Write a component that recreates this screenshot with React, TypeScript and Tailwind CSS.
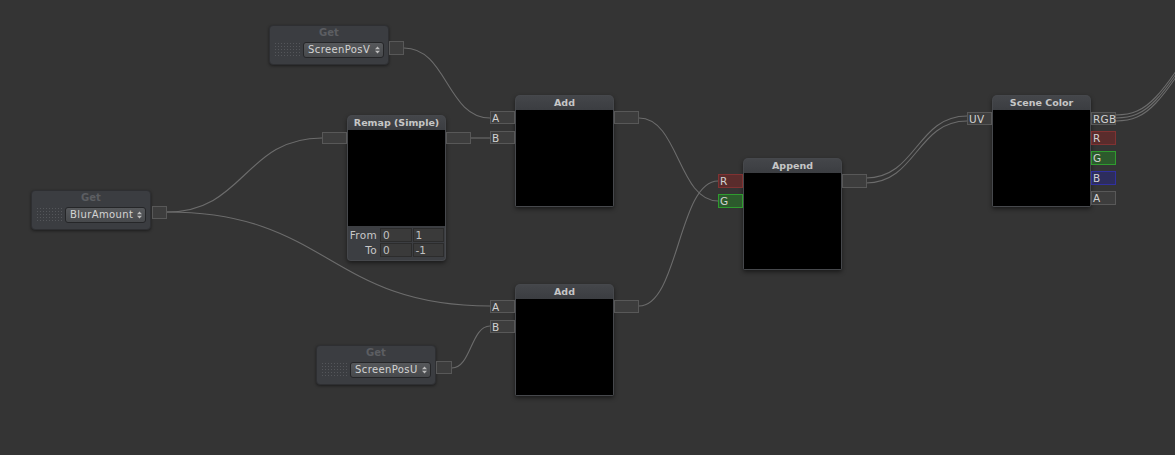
import React from 'react';

type PortKind = 'plain' | 'r' | 'g' | 'b';

interface PortDef {
  x: number;
  y: number;
  w?: number;
  h?: number;
  label?: string;
  kind?: PortKind;
}

interface NodeDef {
  x: number;
  y: number;
  title: string;
}

interface GetDef {
  x: number;
  y: number;
  name: string;
}

const portStyle: Record<PortKind, string> = {
  plain: 'bg-[#3d3d3d] border-[#585858]',
  r: 'bg-[#5a2c2c] border-[#803232]',
  g: 'bg-[#2c5a2c] border-[#2f9b2f]',
  b: 'bg-[#2d2d5d] border-[#30309f]',
};

// bezier with horizontal tangents, like the editor draws its wires
const wire = (x1: number, y1: number, x2: number, y2: number) => {
  const d = Math.max(Math.abs(x2 - x1) * 0.5, 12);
  return `M${x1} ${y1} C${x1 + d} ${y1} ${x2 - d} ${y2} ${x2} ${y2}`;
};

const wires: string[] = [
  wire(404, 48, 490, 118),
  wire(167, 212, 322, 138),
  wire(167, 212, 490, 306),
  wire(471, 138, 490, 138),
  wire(639, 118, 718, 201),
  wire(639, 306, 718, 181),
  wire(452, 368, 490, 326),
  wire(866, 178, 967, 116),
  wire(866, 183, 967, 121),
  ...[-3, 0, 3].map(
    (o) => `M1116 ${118 + o} C1148 ${118 + o} 1160 ${100 + o} 1205 ${30 + o}`
  ),
];

const ports: PortDef[] = [
  // Get outputs
  { x: 389, y: 41, w: 15, h: 14 },
  { x: 152, y: 206, w: 15, h: 13 },
  { x: 436, y: 361, w: 16, h: 13 },
  // Remap
  { x: 322, y: 132, h: 12 },
  { x: 446, y: 132, h: 12 },
  // Add top
  { x: 490, y: 111, label: 'A' },
  { x: 490, y: 131, label: 'B' },
  { x: 614, y: 111 },
  // Add bottom
  { x: 490, y: 300, label: 'A' },
  { x: 490, y: 320, label: 'B' },
  { x: 614, y: 300 },
  // Append
  { x: 718, y: 174, h: 14, label: 'R', kind: 'r' },
  { x: 718, y: 194, h: 14, label: 'G', kind: 'g' },
  { x: 842, y: 174, h: 14 },
  // Scene Color
  { x: 967, y: 112, h: 13, label: 'UV' },
  { x: 1091, y: 112, h: 13, label: 'RGB' },
  { x: 1091, y: 131, h: 14, label: 'R', kind: 'r' },
  { x: 1091, y: 151, h: 14, label: 'G', kind: 'g' },
  { x: 1091, y: 171, h: 14, label: 'B', kind: 'b' },
  { x: 1091, y: 191, h: 14, label: 'A' },
];

const nodes: NodeDef[] = [
  { x: 515, y: 95, title: 'Add' },
  { x: 515, y: 284, title: 'Add' },
  { x: 743, y: 158, title: 'Append' },
  { x: 992, y: 95, title: 'Scene Color' },
];

const getters: GetDef[] = [
  { x: 269, y: 25, name: 'ScreenPosV' },
  { x: 31, y: 190, name: 'BlurAmount' },
  { x: 316, y: 345, name: 'ScreenPosU' },
];

function Port({ x, y, w = 25, h = 13, label, kind = 'plain' }: PortDef) {
  return (
    <div
      className={`absolute flex items-center border pl-px pt-px text-[10.5px] leading-none tracking-[0.3px] text-[#d2d2d2] ${portStyle[kind]}`}
      style={{ left: x, top: y, width: w, height: h }}
    >
      {label}
    </div>
  );
}

function Header({ title }: { title: string }) {
  return (
    <div className="h-[14px] rounded-t-[4px] bg-[linear-gradient(#44464a,#3b3d41)] text-center text-[9.5px] font-bold leading-[14px] text-[#c6c6c6]">
      {title}
    </div>
  );
}

function ShaderNode({ x, y, title }: NodeDef) {
  return (
    <div
      className="absolute w-[99px] rounded-t-[5px] rounded-b-[2px] bg-[#46484c] p-px shadow-[0_2px_4px_rgba(0,0,0,0.5)]"
      style={{ left: x, top: y }}
    >
      <Header title={title} />
      <div className="h-[96px] bg-black" />
    </div>
  );
}

function Field({ value }: { value: string }) {
  return (
    <div className="h-[14px] flex-1 border border-[#2c2c2c] bg-[#3a3a3a] pl-[2px] text-[10.5px] leading-[12px] text-[#c2c2c2]">
      {value}
    </div>
  );
}

function RemapNode() {
  return (
    <div className="absolute left-[347px] top-[115px] w-[99px] rounded-t-[5px] rounded-b-[4px] bg-[#46484c] p-px shadow-[0_2px_4px_rgba(0,0,0,0.5)]">
      <Header title="Remap (Simple)" />
      <div className="h-[96px] bg-black" />
      <div className="flex flex-col gap-[1px] rounded-b-[3px] bg-[#3c3e42] pb-[3px] pl-[1px] pr-[1px] pt-[2px]">
        {[
          ['From', '0', '1'],
          ['To', '0', '-1'],
        ].map(([label, a, b]) => (
          <div key={label} className="flex items-center gap-[1px]">
            <div className="w-[30px] pr-[2px] text-right text-[10.5px] leading-none tracking-[0.3px] text-[#c8c8c8]">
              {label}
            </div>
            <Field value={a} />
            <Field value={b} />
          </div>
        ))}
      </div>
    </div>
  );
}

function GetNode({ x, y, name }: GetDef) {
  return (
    <div
      className="absolute h-[40px] w-[120px] rounded-[4px] border border-[#2e2f32] bg-[#3b3d41] shadow-[0_1px_3px_rgba(0,0,0,0.45)]"
      style={{ left: x, top: y }}
    >
      <div className="h-[15px] text-center text-[10px] font-bold leading-[13px] text-[#5c5e62]">Get</div>
      <div className="flex items-center gap-[3px] pl-[4px] pt-px">
        <div className="h-[16px] w-[26px] bg-[radial-gradient(circle,#54565a_0.6px,transparent_0.9px)] bg-[length:3px_3px]" />
        <div className="flex h-[16px] w-[81px] items-center justify-between rounded-[3px] border border-[#252628] bg-[linear-gradient(#56585b,#47494c)] pl-[4px] pr-[3px] text-[10px] leading-none tracking-[0.4px] text-[#d4d4d4]">
          <span>{name}</span>
          <svg width="5" height="8" viewBox="0 0 5 8" className="shrink-0">
            <path d="M0 3.2 L2.5 0.4 L5 3.2Z M0 4.8 L2.5 7.6 L5 4.8Z" fill="#bdbdbd" />
          </svg>
        </div>
      </div>
    </div>
  );
}

export default function App() {
  return (
    <div className="relative h-[455px] w-[1175px] overflow-hidden bg-[#343434] font-['DejaVu_Sans',sans-serif]">
      <svg className="absolute inset-0" width="1175" height="455">
        {wires.map((d, i) => (
          <path key={i} d={d} fill="none" stroke="#6c6c6c" strokeWidth="1.1" />
        ))}
      </svg>

      {getters.map((g) => (
        <GetNode key={g.name} {...g} />
      ))}

      <RemapNode />
      {nodes.map((n) => (
        <ShaderNode key={`${n.title}-${n.y}`} {...n} />
      ))}

      {ports.map((p, i) => (
        <Port key={i} {...p} />
      ))}
    </div>
  );
}
